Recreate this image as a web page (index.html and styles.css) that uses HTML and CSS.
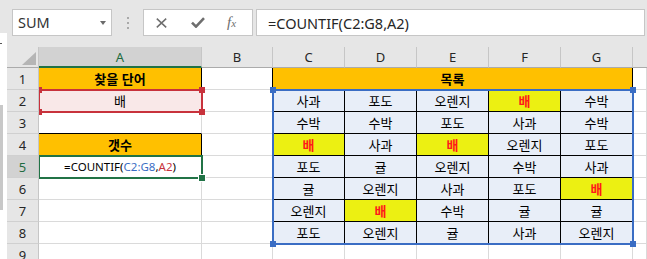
FILE: index.html
```html
<!DOCTYPE html>
<html lang="ko">
<head>
<meta charset="utf-8">
<title>COUNTIF</title>
<link rel="stylesheet" href="styles.css">
</head>
<body>
<div class="app">
  <div class="toolbar">
    <div class="namebox"><span class="name">SUM</span><span class="caret"></span></div>
    <div class="grip"><i></i><i></i><i></i></div>
    <div class="fbtns">
      <svg class="ic-x" width="11" height="10" viewBox="0 0 11 10"><path d="M0.8 0.6 L10.2 9.4 M10.2 0.6 L0.8 9.4" stroke="#6e6e6e" stroke-width="1.5" fill="none"/></svg>
      <svg class="ic-ok" width="14" height="11" viewBox="0 0 14 11"><path d="M1 5.6 L5 9.6 L13 1.2" stroke="#6e6e6e" stroke-width="2.6" fill="none"/></svg>
      <span class="fx">f<span class="fx-x">x</span></span>
    </div>
    <div class="formula">=COUNTIF(C2:G8,A2)</div>
  </div>
  <div class="main">
    <div class="side"><span class="thumb"></span></div>
    <div class="sheet">
      <div class="corner"><svg width="32" height="21" viewBox="0 0 32 21"><polygon points="29,5 29,18 15,18" fill="#b5b5b5"/></svg></div>
      <div class="ch sel">A</div><div class="ch">B</div><div class="ch">C</div><div class="ch">D</div><div class="ch">E</div><div class="ch">F</div><div class="ch">G</div><div class="ch last"></div>

      <div class="rh">1</div><div class="c hdr">찾을 단어</div><div class="c br"></div><div class="c hdr merged">목록</div><div class="c"></div>

      <div class="rh">2</div><div class="c pink">배</div><div class="c"></div>
      <div class="c t">사과</div><div class="c t">포도</div><div class="c t">오렌지</div><div class="c t y">배</div><div class="c t">수박</div><div class="c"></div>

      <div class="rh">3</div><div class="c bb"></div><div class="c"></div>
      <div class="c t">수박</div><div class="c t">수박</div><div class="c t">포도</div><div class="c t">사과</div><div class="c t">수박</div><div class="c"></div>

      <div class="rh">4</div><div class="c hdr">갯수</div><div class="c"></div>
      <div class="c t y">배</div><div class="c t">사과</div><div class="c t y">배</div><div class="c t">오렌지</div><div class="c t">포도</div><div class="c"></div>

      <div class="rh sel">5</div><div class="c latin">=COUNTIF(<span class="rb">C2:G8</span>,<span class="rr">A2</span>)</div><div class="c"></div>
      <div class="c t">포도</div><div class="c t">귤</div><div class="c t">오렌지</div><div class="c t">수박</div><div class="c t">사과</div><div class="c"></div>

      <div class="rh">6</div><div class="c"></div><div class="c"></div>
      <div class="c t">귤</div><div class="c t">오렌지</div><div class="c t">사과</div><div class="c t">포도</div><div class="c t y">배</div><div class="c"></div>

      <div class="rh">7</div><div class="c"></div><div class="c"></div>
      <div class="c t">오렌지</div><div class="c t y">배</div><div class="c t">수박</div><div class="c t">귤</div><div class="c t">귤</div><div class="c"></div>

      <div class="rh">8</div><div class="c"></div><div class="c"></div>
      <div class="c t">포도</div><div class="c t">오렌지</div><div class="c t">귤</div><div class="c t">사과</div><div class="c t">오렌지</div><div class="c"></div>

      <div class="rh">9</div><div class="c"></div><div class="c"></div><div class="c"></div><div class="c"></div><div class="c"></div><div class="c"></div><div class="c"></div><div class="c"></div>

      <div class="ref ref-a2"><i class="h tl"></i><i class="h tr"></i><i class="h bl"></i><i class="h br-h"></i></div>
      <div class="ref ref-range"><i class="h tl"></i><i class="h tr"></i><i class="h bl"></i><i class="h br-h"></i></div>
      <div class="selbox"><i class="fill"></i></div>
    </div>
  </div>
</div>
</body>
</html>
```

FILE: styles.css
```css
* { box-sizing: border-box; margin: 0; padding: 0; }
html, body { width: 647px; height: 259px; overflow: hidden; background: #fff; }
body { font-family: "Noto Sans", "Noto Sans CJK KR", sans-serif; color: #000; }

.app { display: flex; flex-direction: column; height: 259px; }

/* ---------- formula bar ---------- */
.toolbar {
  height: 47px;
  flex: none;
  display: flex;
  align-items: flex-start;
  padding: 9px 2px 0 12px;
  background:
    linear-gradient(#555, #555) 0 43px / 2px 1px no-repeat,
    linear-gradient(#fff, #fff) 0 33px / 7px 14px no-repeat,
    #e6e6e6;
}
.namebox {
  width: 100px; height: 27px;
  background: #fff; border: 1px solid #c6c6c6;
  display: flex; align-items: center; justify-content: space-between;
  padding: 0 5px 0 5px;
}
.name { font-size: 14.5px; color: #333; line-height: 1; }
.caret {
  width: 0; height: 0;
  border-left: 3.5px solid transparent; border-right: 3.5px solid transparent;
  border-top: 4px solid #6b6b6b;
}
.grip { display: flex; flex-direction: column; gap: 3px; margin: 8px 14px 0 15px; }
.grip i { display: block; width: 2px; height: 2px; background: #a9a9a9; }
.fbtns {
  width: 110px; height: 27px;
  background: #fff; border: 1px solid #c6c6c6;
  display: flex; align-items: center;
  padding-left: 12px;
}
.ic-x { display: block; }
.ic-ok { display: block; margin-left: 24px; }
.fx {
  margin-left: 22px;
  font-family: "Liberation Serif", serif; font-style: italic;
  font-size: 15px; color: #6e6e6e; line-height: 1;
}
.fx-x { font-size: 11px; }
.formula {
  flex: 1; height: 27px; margin-left: 3px;
  background: #fff; border: 1px solid #c6c6c6;
  display: flex; align-items: center;
  padding-left: 11px;
  font-size: 14.5px; color: #262626;
}

/* ---------- sheet ---------- */
.main { flex: 1; display: flex; min-height: 0; }
.side { width: 7px; flex: none; padding-top: 58px; background: #fff; }
.thumb { display: block; width: 3px; height: 105px; background: #c8c8c8; }

.sheet {
  flex: 1;
  position: relative;
  overflow: hidden;
  display: grid;
  grid-template-columns: 32px 163px 71px repeat(5, 72px) 1fr;
  grid-template-rows: 21px repeat(9, 22px);
}

.corner { background: #e6e6e6; border-right: 1px solid #c6c6c6; border-bottom: 1px solid #ababab; }
.corner svg { display: block; }
.ch {
  background: #e6e6e6;
  border-right: 1px solid #c6c6c6; border-bottom: 1px solid #ababab;
  display: flex; align-items: center; justify-content: center;
  font-size: 13px; color: #262626;
}
.ch.last { border-right: 0; }
.ch.sel { background: #d2d2d2; color: #1f6b40; border-bottom: 2px solid #217346; }

.rh {
  position: relative; z-index: 3;
  background: #e6e6e6;
  border-right: 1px solid #c6c6c6; border-bottom: 1px solid #d0d0d0;
  display: flex; align-items: center; justify-content: center;
  font-size: 13px; color: #262626;
}
.rh.sel { background: #d2d2d2; color: #1f6b40; }

.c {
  border-right: 1px solid #dadada; border-bottom: 1px solid #dadada;
  display: flex; align-items: center; justify-content: center;
  font-family: "Noto Sans CJK KR", "Noto Sans", sans-serif;
  font-size: 13px; color: #000; white-space: nowrap;
}
.c.latin { font-family: "Noto Sans", "Noto Sans CJK KR", sans-serif; font-size: 11.5px; }
.hdr { background: #ffc000; font-weight: bold; border-right-color: #000; border-bottom-color: #000; }
.merged { grid-column: span 5; }
.br { border-right-color: #000; }
.bb { border-bottom-color: #000; }
.pink { background: #f9e8e8; }
.t { background: #e8eef8; border-right-color: #000; border-bottom-color: #000; }
.y { background: #ecf012; color: #ff1a1a; font-weight: bold; }
.rb { color: #3a6dc4; }
.rr { color: #c8323c; }

/* ---------- reference / selection outlines ---------- */
.ref, .selbox { position: absolute; z-index: 2; inset: -1px; pointer-events: none; }
.ref-a2 { grid-row: 3 / 4; grid-column: 2 / 3; border: 2px solid #c8323c; }
.ref-range { grid-row: 3 / 10; grid-column: 4 / 9; border: 2px solid #3a6dc4; }
.selbox { grid-row: 6 / 7; grid-column: 2 / 3; border: 2px solid #217346; }

.h { position: absolute; width: 6px; height: 6px; display: block; }
.ref-a2 .h { background: #c8323c; }
.ref-range .h { background: #3a6dc4; }
.tl { top: -4px; left: -4px; }
.tr { top: -4px; right: -4px; }
.bl { bottom: -4px; left: -4px; }
.br-h { bottom: -4px; right: -4px; }
.fill {
  position: absolute; right: -4px; bottom: -4px;
  width: 6px; height: 6px; display: block;
  background: #217346; box-shadow: 0 0 0 1px #fff;
}
```
